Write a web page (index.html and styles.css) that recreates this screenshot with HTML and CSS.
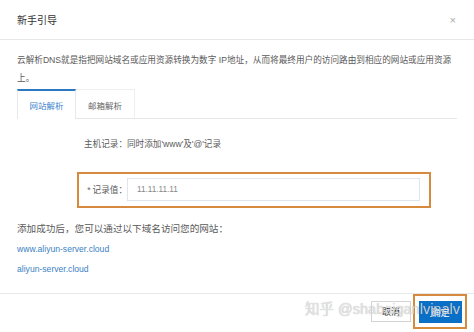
FILE: index.html
```html
<!DOCTYPE html>
<html lang="zh-CN">
<head>
    <meta charset="UTF-8">
    <meta name="viewport" content="width=device-width, initial-scale=1.0">
    <title>新手引导</title>
    <link rel="stylesheet" href="styles.css">
</head>
<body>

    <!-- 新手引导弹窗 -->
    <div class="dialog">
        <div class="dialog-header">
            <span class="dialog-title">新手引导</span>
            <span class="dialog-close">×</span>
        </div>

        <div class="dialog-body">
            <p class="intro">云解析DNS就是指把网站域名或应用资源转换为数字 IP地址，从而将最终用户的访问路由到相应的网站或应用资源上。</p>

            <div class="tabs">
                <a href="#" class="tab active">网站解析</a>
                <a href="#" class="tab">邮箱解析</a>
            </div>

            <div class="record-form">
                <div class="form-row">
                    <span class="form-label">主机记录：</span>
                    <span class="form-value">同时添加'www'及'@'记录</span>
                </div>
                <div class="form-row highlight">
                    <span class="form-label"><i class="required">*</i>记录值：</span>
                    <input type="text" class="form-input" value="11.11.11.11">
                </div>
            </div>

            <p class="result-tip">添加成功后，您可以通过以下域名访问您的网站：</p>
            <a href="#" class="site-link">www.aliyun-server.cloud</a>
            <a href="#" class="site-link">aliyun-server.cloud</a>
        </div>

        <div class="dialog-footer">
            <button class="btn">取消</button>
            <span class="highlight-box"><button class="btn btn-primary">确定</button></span>
        </div>

        <!-- 水印 -->
        <div class="watermark">知乎 @shabaiganlvjnalv</div>
    </div>

</body>
</html>
```

FILE: styles.css
```css
body {
    margin: 0;
    padding: 0;
    background-color: #fff;
    color: #555;
    font-family: "Liberation Sans", "Noto Sans CJK SC", sans-serif;
}

.dialog {
    position: relative;
    width: 474px;
    height: 332px;
    overflow: hidden;
    background-color: #fff;
}

/* 头部 */
.dialog-header {
    height: 39px;
    padding: 0 18px 0 17px;
    display: flex;
    align-items: center;
    justify-content: space-between;
    border-bottom: 1px solid #e8e8e8;
}

.dialog-title {
    font-size: 10px;
    color: #333;
}

.dialog-close {
    font-size: 11px;
    color: #aaa;
}

/* 内容 */
.dialog-body {
    padding: 11px 17px 14px;
}

.intro {
    margin: 0;
    font-size: 8.65px;
    line-height: 18px;
    color: #5a5a5a;
}

.tabs {
    display: flex;
    margin-top: 2px;
    border-bottom: 1px solid #e6e6e6;
}

.tab {
    width: 59px;
    height: 29px;
    box-sizing: border-box;
    display: flex;
    align-items: center;
    justify-content: center;
    font-size: 8.5px;
    color: #666;
    text-decoration: none;
    border-top: 1px solid #eee;
    border-right: 1px solid #eee;
    padding-top: 1px;
}

.tab.active {
    color: #3b82cc;
    border-top: 2px solid #2c78c4;
    border-left: 1px solid #e8e8e8;
    border-right: 1px solid #e8e8e8;
    background-color: #fff;
    margin-bottom: -1px;
    height: 30px;
    padding-top: 0;
}

/* 记录表单 */
.record-form {
    margin-left: 60px;
    width: 354px;
}

.form-row {
    display: flex;
    align-items: center;
    border: 2px solid transparent;
    padding: 0 9px 0 2px;
    margin-top: 14px;
    line-height: 18px;
    font-size: 8.6px;
    color: #5a5a5a;
}

.form-row.highlight {
    margin-top: 17px;
    padding: 4px 9px 5px 2px;
    border-color: #d68a3e;
}

.form-label {
    width: 46px;
    flex-shrink: 0;
    text-align: right;
    white-space: nowrap;
}

.required {
    font-style: normal;
    color: #666;
    margin-right: 2px;
}

.form-input {
    flex: 1;
    height: 23px;
    box-sizing: border-box;
    border: 1px solid #dfe5ec;
    padding: 0 9px;
    font-family: "Liberation Sans", sans-serif;
    font-size: 8.2px;
    color: #888;
    outline: none;
}

.result-tip {
    margin: 11px 0 0;
    font-size: 9.6px;
    line-height: 20px;
    color: #5a5a5a;
}

.site-link {
    display: block;
    font-size: 8.6px;
    line-height: 20px;
    color: #3b7fc4;
    text-decoration: none;
}

/* 底部按钮 */
.dialog-footer {
    display: flex;
    justify-content: flex-end;
    align-items: center;
    padding-right: 7px;
    border-top: 1px solid #e8e8e8;
}

.highlight-box {
    display: flex;
    border: 2px solid #d68a3e;
    padding: 5px 3px 4px 4px;
}

.btn {
    width: 40px;
    height: 21px;
    margin-right: 2px;
    border: 1px solid #d4d4d4;
    background-color: #fff;
    color: #333;
    font-family: "Noto Sans CJK SC", sans-serif;
    font-size: 9px;
    padding: 0;
}

.btn-primary {
    width: 43px;
    height: 22px;
    margin-right: 0;
    border: none;
    background-color: #0a6fc7;
    color: #fff;
}

/* 水印 */
.watermark {
    position: absolute;
    left: 305px;
    top: 300px;
    font-size: 14.5px;
    line-height: 18px;
    white-space: nowrap;
    color: rgba(232, 232, 232, 0.85);
    text-shadow: 0 0 1px rgba(0, 0, 0, 0.3);
}
```
